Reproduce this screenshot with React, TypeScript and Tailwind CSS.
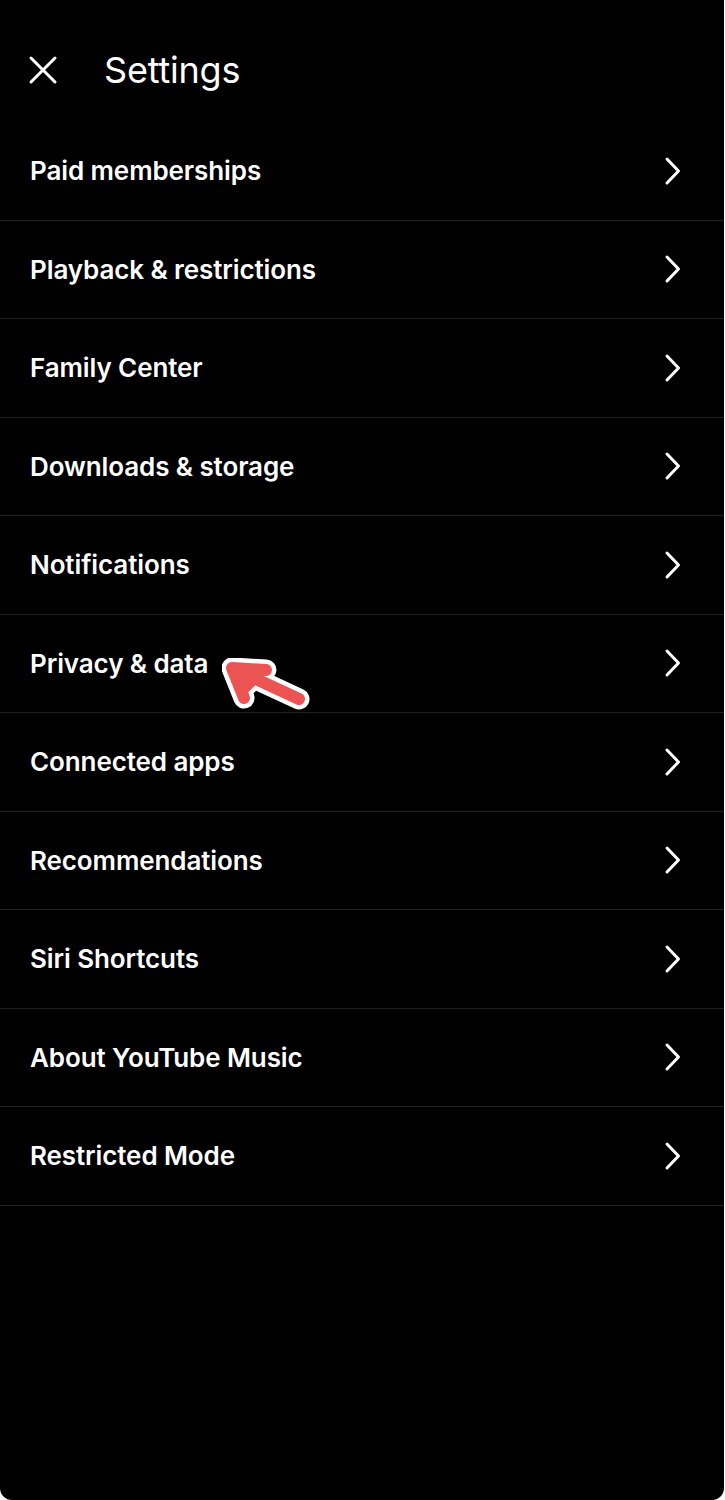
const items = [
  "Paid memberships",
  "Playback & restrictions",
  "Family Center",
  "Downloads & storage",
  "Notifications",
  "Privacy & data",
  "Connected apps",
  "Recommendations",
  "Siri Shortcuts",
  "About YouTube Music",
  "Restricted Mode",
];

function PointerArrow() {
  const d = "M10 10 L44 12 M10 10 L22 40 M10 10 L22 30 L34 18 Z M10 10 L77 41";
  return (
    <svg
      width="92"
      height="56"
      viewBox="0 0 92 56"
      className="absolute left-[222px] top-[43px]"
    >
      <g strokeLinecap="round" strokeLinejoin="round">
        <path d={d} stroke="#fff" strokeWidth="21" fill="#fff" />
        <path d={d} stroke="#ec5353" strokeWidth="12" fill="#ec5353" />
      </g>
    </svg>
  );
}

function Chevron() {
  return (
    <svg width="18" height="30" viewBox="0 0 18 30" fill="none">
      <path
        d="M3 3 L14.5 15 L3 27"
        stroke="#fff"
        strokeWidth="3"
        strokeLinecap="round"
        strokeLinejoin="round"
      />
    </svg>
  );
}

function CloseIcon() {
  return (
    <svg width="30" height="30" viewBox="0 0 30 30" fill="none">
      <path
        d="M3 3 L27 27 M27 3 L3 27"
        stroke="#fff"
        strokeWidth="3"
        strokeLinecap="round"
      />
    </svg>
  );
}

export default function App() {
  return (
    <div className="bg-white w-[725px] h-[1500px]">
      <div
        className="w-[724px] h-[1500px] bg-black rounded-b-[12px] text-white"
        style={{ fontFamily: "Inter, 'Noto Sans', sans-serif" }}
      >
        {/* Header */}
        <div className="h-[122px] flex items-center pl-[28px] pt-[18px]">
          <CloseIcon />
          <h1 className="ml-[46px] text-[36px] font-normal tracking-[-0.2px]">
            Settings
          </h1>
        </div>

        {/* Items */}
        <div>
          {items.map((label) => (
            <div
              key={label}
              className="relative h-[98.5px] flex items-center justify-between pl-[30px] pr-[42px] border-b border-[#222222]"
            >
              <span className="text-[26px] font-semibold tracking-[-0.1px]">
                {label}
              </span>
              <Chevron />
              {label === "Privacy & data" && <PointerArrow />}
            </div>
          ))}
        </div>
      </div>
    </div>
  );
}
